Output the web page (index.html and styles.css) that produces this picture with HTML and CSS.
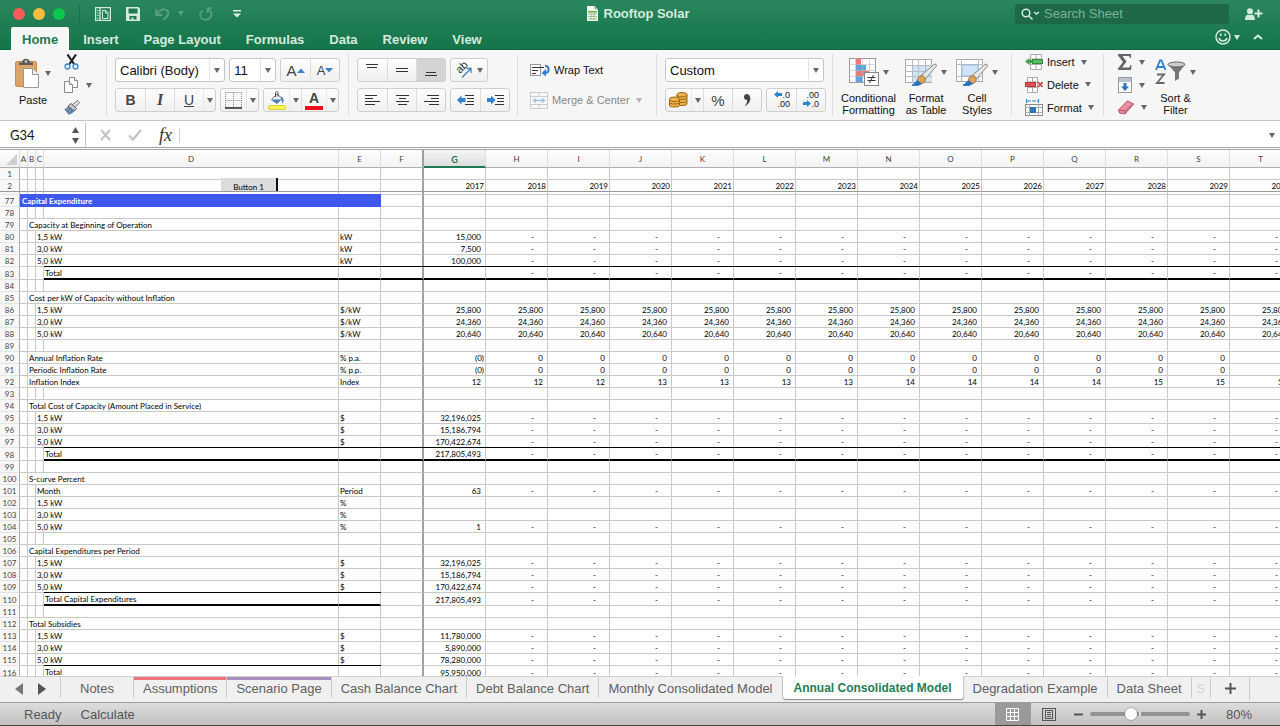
FILE: index.html
```html
<!DOCTYPE html>
<html lang="en">
<head>
    <meta charset="UTF-8">
    <meta name="viewport" content="width=device-width, initial-scale=1.0">
    <title>Rooftop Solar</title>
    <link rel="stylesheet" href="styles.css">
</head>
<body>

<header class="top">
    <div class="titlebar">
        <div class="lights">
            <span class="light red"></span>
            <span class="light amber"></span>
            <span class="light green"></span>
        </div>
        <div class="quick">
            <button type="button" aria-label="Gallery">
                <svg width="16" height="14" viewBox="0 0 16 14" fill="none" stroke="#d5eadf"><rect x="0.5" y="0.5" width="15" height="13" stroke-width="1.4"/><path d="M5 1v12" stroke-width="1.4"/><path d="M2 3.5h1.5M2 6h1.5M2 8.500h1.500M2 11h1.500"/><path d="M7.500 3.500h3.500l2 2v6h-5.500z"/><path d="M10.500 3.500v2.500h2.500"/></svg>
            </button>
            <button type="button" aria-label="Save">
                <svg width="14" height="14" viewBox="0 0 14 14"><path d="M0 0h12.500L14 1.500V14H0z" fill="#d5eadf"/><path d="M2.500 1.500h9v5h-9zM3.500 9h7v3.500h-3v-2h-2v2h-2z" fill="#20794f"/></svg>
            </button>
            <button type="button" class="dim" aria-label="Undo">
                <svg width="16" height="14" viewBox="0 0 16 14" fill="none" stroke="#5c9f80" stroke-width="1.800"><path d="M1.200 2v6h6M1.500 7.500C5 2.500 9 1.500 12 3.500c3.500 3-.5 6.500-3.500 9"/></svg>
                <span class="caret"></span>
            </button>
            <button type="button" class="dim" aria-label="Redo">
                <svg width="14" height="14" viewBox="0 0 14 14" fill="none" stroke="#5c9f80" stroke-width="1.800"><path d="M8 1.200h5M8.500 1v5M9 2.500c4 2 4.500 6 1.500 8.800-3 2.400-7.500 1.500-9-1.800C.5 7 2 4.500 4 3.500"/></svg>
            </button>
            <button type="button" aria-label="Customize toolbar">
                <svg width="8" height="8" viewBox="0 0 8 8" fill="#e3f2ea"><path d="M0 0h8v1.500H0zM0 3.500h8L4 7.500z"/></svg>
            </button>
        </div>
        <h1 class="title">
            <svg width="11" height="15" viewBox="0 0 11 15"><path d="M0 0h7.500L11 3.500V15H0z" fill="#f4f7f2"/><path d="M7.500 0v3.500H11z" fill="#9bb8a5"/><path d="M1 5h9v1.500H1z" fill="#6fae55"/><path d="M1 8h9M1 10.500h9M1 13h9M4 6v8M7 6v8" stroke="#9cc389" fill="none"/></svg>
            Rooftop Solar
        </h1>
        <div class="finder">
            <label class="search">
                <svg width="19" height="12" viewBox="0 0 19 12" fill="none" stroke="#d5eadf" stroke-width="1.500"><circle cx="5" cy="5" r="3.800"/><path d="M8 8l3.500 3.500M13 4l2.500 2L18 4"/></svg>
                <input type="text" placeholder="Search Sheet" aria-label="Search Sheet">
            </label>
            <button type="button" aria-label="Share">
                <svg width="18" height="12" viewBox="0 0 18 12" fill="#d5eadf"><circle cx="5" cy="3.200" r="3"/><path d="M0 12c0-4 1.500-5 3-5.500 1 .8 3 .8 4 0 1.500.5 3 1.500 3 5.500z"/><path d="M12.500 1.500h2V4.500H17.500v2H14.500v3h-2v-3H9.500v-2h3z"/></svg>
            </button>
        </div>
    </div>
    <nav class="menu">
        <a href="#" class="current">Home</a>
        <a href="#">Insert</a>
        <a href="#">Page Layout</a>
        <a href="#">Formulas</a>
        <a href="#">Data</a>
        <a href="#">Review</a>
        <a href="#">View</a>
        <div class="menu-right">
            <button type="button" aria-label="Feedback">
                <svg width="16" height="16" viewBox="0 0 16 16" fill="none" stroke="#d5eadf" stroke-width="1.500"><circle cx="8" cy="8" r="7"/><path d="M4 9c1 4 7 4 8 0M5.800 4.500v2.500M10.200 4.500v2.500"/></svg>
                <span class="caret"></span>
            </button>
            <button type="button" aria-label="Collapse ribbon">
                <svg width="10" height="6" viewBox="0 0 10 6" fill="none" stroke="#d5eadf" stroke-width="2"><path d="M1 5l4-3.500L9 5"/></svg>
            </button>
        </div>
    </nav>
</header>

<section class="ribbon">
    <div class="group clipboard">
        <button type="button" class="big">
            <span class="pic">
                <svg width="26" height="30" viewBox="0 0 26 30"><rect x="0.500" y="3.500" width="21" height="25" rx="1.500" fill="#dca566" stroke="#c48e50"/><path d="M4 7V4.500h3C7-.5 15-.5 15 4.500h3V7z" fill="#5c5c5c"/><circle cx="11" cy="3.500" r="1.300" fill="#ccc"/><path d="M8.500 10.500h9l6 6v13h-15z" fill="#fff" stroke="#999"/><path d="M17.500 10.500v6h6" fill="#eee" stroke="#999"/></svg>
                <span class="caret"></span>
            </span>
            Paste
        </button>
        <div class="stack">
            <button type="button" aria-label="Cut">
                <svg width="16" height="16" viewBox="0 0 16 16" fill="none"><path d="M3.500 0.500L10 10M12 0.500L5.500 10" stroke="#222" stroke-width="2.200"/><circle cx="3.500" cy="12.500" r="2.500" stroke="#3a86c8" stroke-width="1.300"/><circle cx="11.500" cy="12.500" r="2.500" stroke="#3a86c8" stroke-width="1.300"/></svg>
            </button>
            <button type="button" aria-label="Copy">
                <svg width="15" height="16" viewBox="0 0 15 16" fill="#fff" stroke="#8a8a8a"><path d="M5.500 0.500h5l3 3v7h-8z"/><path d="M10.500 .5v3h3"/><path d="M.5 4.500h5l3 3v8h-8z"/><path d="M5.500 4.500v3h3"/></svg>
                <span class="caret"></span>
            </button>
            <button type="button" aria-label="Format Painter">
                <svg width="16" height="15" viewBox="0 0 16 15"><path d="M13.500 0.500l2 2-4.500 5-3-2.500z" fill="#ddd" stroke="#777"/><path d="M7 3.500l5.500 5-2 2.500-6.500-5z" fill="#c8c8c8" stroke="#666"/><path d="M4 6l6.500 5c-2 2-4 3.500-6 3.500C2.500 12 1.500 10.500 0 9.500 2 9 3 8 4 6z" fill="#4f7fb4"/><path d="M5 8.500L2.500 10.500M7 10L4.500 12.500" stroke="#d6a76a"/></svg>
            </button>
        </div>
    </div>

    <div class="group lines font">
        <div class="row">
            <label class="picker family"><select aria-label="Font"><option>Calibri (Body)</option></select></label>
            <label class="picker size"><select aria-label="Font size"><option>11</option></select></label>
            <div class="set">
                <button type="button" class="half" aria-label="Increase font size"><span class="grow">A</span><svg width="8" height="5" viewBox="0 0 8 5"><path d="M0 5l4-4.500L8 5z" fill="#3f82c4"/></svg></button>
                <button type="button" class="half" aria-label="Decrease font size"><span class="shrink">A</span><svg width="8" height="5" viewBox="0 0 8 5"><path d="M0 0l4 4.500L8 0z" fill="#3f82c4"/></svg></button>
            </div>
        </div>
        <div class="row">
            <div class="set">
                <button type="button" class="half"><b>B</b></button>
                <button type="button" class="half"><i>I</i></button>
                <button type="button" class="half"><u>U</u></button>
                <button type="button" class="drop" aria-label="Underline styles"><span class="caret"></span></button>
            </div>
            <div class="set">
                <button type="button" class="swatch" aria-label="Borders">
                    <svg width="17" height="17" viewBox="0 0 17 17" fill="none"><path d="M.5 .5h16M.5 8.500h16M.5 0v16M8.500 0v16M16.500 0v16" stroke="#888" stroke-dasharray="1 1"/><path d="M0 16h17" stroke="#222" stroke-width="1.500"/></svg>
                </button>
                <button type="button" class="drop" aria-label="Border styles"><span class="caret"></span></button>
            </div>
            <div class="set">
                <button type="button" class="swatch" aria-label="Fill color">
                    <svg width="18" height="19" viewBox="0 0 18 19"><path d="M3.500 8.500l5.500-5.500 5 4.500L9 12.500z" fill="#eee" stroke="#777"/><path d="M3.500 8.500h9.500L9 12.500z" fill="#3f82c4"/><path d="M7.500 6V2.500C7.500 0 10 0 10 2.500V5.500" fill="none" stroke="#444"/><path d="M12.500 5.500c3.500 1 4 4 2 7z" fill="#3f82c4"/><rect x="0.500" y="14.500" width="17" height="4" rx="1" fill="#fcf34b" stroke="#d8cf3c"/></svg>
                </button>
                <button type="button" class="drop" aria-label="Fill colors"><span class="caret"></span></button>
                <button type="button" class="swatch" aria-label="Font color">
                    <span class="ink">A</span>
                </button>
                <button type="button" class="drop" aria-label="Font colors"><span class="caret"></span></button>
            </div>
        </div>
    </div>

    <div class="group lines align">
        <div class="row">
            <div class="set">
                <button type="button" class="half" aria-label="Top align"><svg width="15" height="16" viewBox="0 0 15 16" stroke="#333"><path d="M1 2.500h12M2 5.500h10"/></svg></button>
                <button type="button" class="half" aria-label="Middle align"><svg width="15" height="16" viewBox="0 0 15 16" stroke="#333"><path d="M1 6.500h12M1 9.500h12"/></svg></button>
                <button type="button" class="half pressed" aria-label="Bottom align"><svg width="15" height="16" viewBox="0 0 15 16" stroke="#333"><path d="M2 10.500h10M1 13.500h12"/></svg></button>
            </div>
            <div class="set">
                <button type="button" class="turn" aria-label="Orientation">
                    <svg class="slant" width="18" height="18" viewBox="0 0 18 18"><text x="5" y="13" font-size="11" fill="#333" transform="rotate(-45 5 13)">ab</text><path d="M7 16.500L15.500 8M11.500 7.500h4.500V12" fill="none" stroke="#3f82c4" stroke-width="1.300"/></svg>
                    <span class="caret"></span>
                </button>
            </div>
        </div>
        <div class="row">
            <div class="set">
                <button type="button" class="half" aria-label="Align left"><svg width="15" height="12" viewBox="0 0 15 12" stroke="#333"><path d="M0 1.500h12M0 4.500h8M0 7.500h15M0 10.500h10"/></svg></button>
                <button type="button" class="half" aria-label="Center"><svg width="15" height="12" viewBox="0 0 15 12" stroke="#333"><path d="M1 1.500h13M4 4.500h7M1 7.500h13M3 10.500h9"/></svg></button>
                <button type="button" class="half" aria-label="Align right"><svg width="15" height="12" viewBox="0 0 15 12" stroke="#333"><path d="M3 1.500h12M7 4.500h8M0 7.500h15M5 10.500h10"/></svg></button>
            </div>
            <div class="set">
                <button type="button" class="half" aria-label="Decrease indent"><svg width="17" height="12" viewBox="0 0 17 12"><path d="M8 1.500h9M10 4.500h7M10 7.500h7M8 10.500h9" stroke="#333"/><path d="M0 6l4.500-4.500v2.500H8.500v4H4.500v2.500z" fill="#3181cf"/></svg></button>
                <button type="button" class="half" aria-label="Increase indent"><svg width="17" height="12" viewBox="0 0 17 12"><path d="M8 1.500h9M10 4.500h7M10 7.500h7M8 10.500h9" stroke="#333"/><path d="M8.500 6L4 1.500V4H0v4h4v2.500z" fill="#3181cf"/></svg></button>
            </div>
        </div>
    </div>

    <div class="group lines wrap">
        <button type="button" class="flat">
            <svg width="20" height="14" viewBox="0 0 20 14"><rect x="0.500" y="1.500" width="10" height="11" fill="#fff" stroke="#999"/><path d="M2 4.500h12M2 7.500h6M2 10.500h4" stroke="#333"/><path d="M15 2.500c5 1 4.500 7 .5 7.500" fill="none" stroke="#3181cf" stroke-width="2"/><path d="M11.500 10l4.500-4v7.500z" fill="#3181cf"/></svg>
            Wrap Text
        </button>
        <button type="button" class="flat off">
            <svg width="18" height="17" viewBox="0 0 18 17"><rect x="0.500" y="0.500" width="17" height="16" fill="#f8f8f8" stroke="#ccc"/><path d="M.5 4.500h17M.5 12.500h17M9 0v4M9 13v4" stroke="#ccc"/><path d="M4 8.500h10M6 6.500l-2.500 2L6 10.500M12 6.500l2.500 2L12 10.500" fill="none" stroke="#9cc6e8" stroke-width="1.300"/></svg>
            Merge &amp; Center
            <span class="caret"></span>
        </button>
    </div>

    <div class="group lines number">
        <label class="picker format"><select aria-label="Number format"><option>Custom</option></select></label>
        <div class="row">
            <div class="set">
                <button type="button" class="swatch" aria-label="Accounting format">
                    <svg width="19" height="16" viewBox="0 0 19 16" stroke="#9a6314" fill="#edb24b"><path d="M8 9v3c0 2 10 2 10 0V9z"/><path d="M8 6v3c0 2 10 2 10 0V6z"/><path d="M8 3v3c0 2 10 2 10 0V3z"/><ellipse cx="13" cy="2.800" rx="5" ry="2.200"/><path d="M.5 10.500v3c0 2 10 2 10 0v-3z"/><path d="M.5 7.500v3c0 2 10 2 10 0v-3z"/><ellipse cx="5.500" cy="7.300" rx="5" ry="2.200"/></svg>
                </button>
                <button type="button" class="drop" aria-label="Currencies"><span class="caret"></span></button>
                <button type="button" class="half percent">%</button>
                <button type="button" class="half" aria-label="Comma style"><svg width="8" height="12" viewBox="0 0 8 12"><path d="M1 3a3 3 0 013-3c5 1 4.500 9.500-2.500 12 2-2 3-4 2.500-6a3 3 0 01-3-3z" fill="#444"/></svg></button>
            </div>
            <div class="set">
                <button type="button" class="half decimals" aria-label="Increase decimal">
                    <span><svg width="8" height="7" viewBox="0 0 8 7"><path d="M0 3.500L4 0v2h4v3H4v2z" fill="#3181cf"/></svg>.0</span>
                    <span>.00</span>
                </button>
                <button type="button" class="half decimals" aria-label="Decrease decimal">
                    <span>.00</span>
                    <span><svg width="8" height="7" viewBox="0 0 8 7"><path d="M8 3.500L4 0v2H0v3h4v2z" fill="#3181cf"/></svg>.0</span>
                </button>
            </div>
        </div>
    </div>

    <div class="group styles">
        <button type="button" class="big">
            <span class="pic">
                <svg width="30" height="28" viewBox="0 0 30 28"><rect x="0.500" y="0.500" width="26" height="24" fill="#fff" stroke="#999"/><path d="M7 1h5v6H7zM7 13h13v5H7z" fill="#ee7a7e"/><path d="M7 7h10v6H7zM7 18h7v6H7z" fill="#5fa3e0"/><path d="M0 6.500h27M0 12.500h27M0 18.500h27M6.500 0v25M13.500 0v25M20.500 0v25" stroke="#bbb" fill="none" opacity="0.600"/><rect x="15.500" y="14.500" width="14" height="13" fill="#fff" stroke="#888"/><path d="M18.500 19.500h8M18.500 22.500h8M24.500 17l-4 8" stroke="#333"/></svg>
                <span class="caret"></span>
            </span>
            Conditional<br>Formatting
        </button>
        <button type="button" class="big">
            <span class="pic">
                <svg width="32" height="28" viewBox="0 0 32 28"><rect x="0.500" y="1.500" width="26" height="23" fill="#fff" stroke="#aaa"/><path d="M7 7h20v17H7z" fill="#cfe4f7"/><path d="M0 7.500h27M0 13.500h27M0 18.500h27M7.500 1v24M13.500 1v24M20.500 1v24" stroke="#b5bcc2" fill="none"/><path d="M15.500 18L29 6.500c2-1 3 0 2 2L19.500 22z" fill="#e8e8e8" stroke="#888"/><path d="M13 20c2-3 6-3 7 0 1 4-2 6-6 6-2-1-2-4-1-6z" fill="#dba55e" stroke="#a9722f"/><path d="M7 27c3-1 3-3 5-4 2 0 4 2 4 3-3 2-6 2-9 1z" fill="#2873c0" stroke="#2873c0"/></svg>
                <span class="caret"></span>
            </span>
            Format<br>as Table
        </button>
        <button type="button" class="big">
            <span class="pic">
                <svg width="32" height="28" viewBox="0 0 32 28"><rect x="0.500" y="1.500" width="26" height="22" fill="#fff" stroke="#aaa"/><path d="M0 6.500h27M0 18.500h27M5.500 1v22M22.500 1v22" stroke="#b5bcc2" fill="none"/><path d="M6 7h16v11H6z" fill="#cfe4f7" stroke="#9bbbd8"/><path d="M15.500 18L29 6.500c2-1 3 0 2 2L19.500 22z" fill="#e8e8e8" stroke="#888"/><path d="M13 20c2-3 6-3 7 0 1 4-2 6-6 6-2-1-2-4-1-6z" fill="#dba55e" stroke="#a9722f"/><path d="M7 27c3-1 3-3 5-4 2 0 4 2 4 3-3 2-6 2-9 1z" fill="#2873c0" stroke="#2873c0"/></svg>
                <span class="caret"></span>
            </span>
            Cell<br>Styles
        </button>
    </div>

    <div class="group cells">
        <button type="button" class="flat">
            <svg width="18" height="16" viewBox="0 0 18 16"><path d="M5.500 .5h11v15h-11zM5.500 5h11M5.500 10.500h11M11 0v16" fill="#fff" stroke="#aaa"/><path d="M0 7.500L4.500 4v2H7v3H4.500v2z" fill="#3da34b"/><rect x="7.500" y="5.500" width="10" height="4" fill="#5dbb63" stroke="#2f8a3c"/></svg>
            Insert
            <span class="caret"></span>
        </button>
        <button type="button" class="flat">
            <svg width="18" height="16" viewBox="0 0 18 16"><path d="M2.500 .5h10v15h-10zM2.500 5h10M2.500 10.500h10M7.500 0v16" fill="#fff" stroke="#aaa"/><rect x="0.500" y="5.500" width="10" height="4" fill="#e25353" stroke="#b93434"/><path d="M13 5l4.500 5M17.500 5L13 10" stroke="#d23c3c" stroke-width="1.600"/></svg>
            Delete
            <span class="caret"></span>
        </button>
        <button type="button" class="flat">
            <svg width="18" height="17" viewBox="0 0 18 17"><path d="M1.500 0v4M13.500 0v4M2 2h11" stroke="#3181cf" stroke-dasharray="4 1"/><rect x="0.500" y="5.500" width="17" height="11" fill="#fff" stroke="#888"/><path d="M0 8.500h18M0 13.500h18M4.500 5v12M13.500 5v12" stroke="#aaa"/><rect x="5" y="8" width="6" height="6" fill="#2f77bd"/></svg>
            Format
            <span class="caret"></span>
        </button>
    </div>

    <div class="group editing">
        <div class="stack">
            <button type="button" aria-label="AutoSum">
                <svg width="14" height="16" viewBox="0 0 14 16"><path d="M0 0h13v4h-1C11.500 2 11 2 9.500 2H4.500l4 5.500-4.500 6h6c1.500 0 2-.5 2.500-2.500h1L13 16H0v-1.500L5 8 0 1.500z" fill="#666"/></svg>
                <span class="caret"></span>
            </button>
            <button type="button" aria-label="Fill">
                <svg width="14" height="16" viewBox="0 0 14 16"><rect x="0.500" y="0.500" width="13" height="15" fill="#fff" stroke="#999"/><path d="M1 1h12v4H1z" fill="#b9c3cc"/><path d="M5.500 6h3v3.500h2.500L7 14 3 9.500h2.500z" fill="#2f77bd"/></svg>
                <span class="caret"></span>
            </button>
            <button type="button" aria-label="Clear">
                <svg width="16" height="15" viewBox="0 0 16 15"><path d="M.5 10L9.500 .8l6 3.200L7 14 1.500 13z" fill="#ea8fa0" stroke="#b5566a"/><path d="M.5 10l6.500 1V14M7 11l8.500-7" fill="none" stroke="#b5566a"/></svg>
                <span class="caret"></span>
            </button>
        </div>
        <button type="button" class="big">
            <span class="pic">
                <svg width="31" height="28" viewBox="0 0 31 28"><path d="M1 12L5 2.500h1.500L10.500 12M2.500 9h6.500" fill="none" stroke="#3181cf" stroke-width="1.800"/><path d="M2 16.500h7L2 25h7.500" fill="none" stroke="#666" stroke-width="1.800"/><path d="M13 6.500l7 8v8.500l4-2.500v-6l6-8z" fill="#777"/><ellipse cx="21.500" cy="6.500" rx="8.500" ry="2.500" fill="#ccc" stroke="#666"/></svg>
                <span class="caret"></span>
            </span>
            Sort &amp;<br>Filter
        </button>
    </div>
</section>

<section class="formula-bar">
    <label class="name-box">
        <input type="text" value="G34" aria-label="Name Box">
        <svg width="7" height="17" viewBox="0 0 7 17" fill="#555"><path d="M0 6l3.500-6L7 6zM0 11l3.500 6L7 11z"/></svg>
    </label>
    <button type="button" aria-label="Cancel"><svg width="11" height="12" viewBox="0 0 11 12" stroke="#c4c4c4" stroke-width="2"><path d="M1 1l9 10M10 1L1 11"/></svg></button>
    <button type="button" aria-label="Enter"><svg width="14" height="12" viewBox="0 0 14 12" fill="none" stroke="#c4c4c4" stroke-width="2.400"><path d="M1 6.500L5 10.500 13 1"/></svg></button>
    <button type="button" class="fx">fx</button>
    <input type="text" class="formula" aria-label="Formula">
    <button type="button" class="expand" aria-label="Expand formula bar"><span class="caret"></span></button>
</section>

<main class="sheet">
    <table>
        <colgroup id="cols"></colgroup>
        <thead id="head"></thead>
        <tbody id="body"></tbody>
    </table>
</main>

<nav class="tabs">
    <div class="arrows">
        <button type="button" aria-label="Previous sheet"><svg width="8" height="12" viewBox="0 0 8 12"><path d="M8 0v12L0 6z" fill="#777"/></svg></button>
        <button type="button" aria-label="Next sheet"><svg width="8" height="12" viewBox="0 0 8 12"><path d="M0 0v12l8-6z" fill="#555"/></svg></button>
    </div>
    <a href="#" class="roomy">Notes</a>
    <a href="#" class="pink">Assumptions</a>
    <a href="#" class="purple">Scenario Page</a>
    <a href="#">Cash Balance Chart</a>
    <a href="#">Debt Balance Chart</a>
    <a href="#">Monthly Consolidated Model</a>
    <a href="#" class="active">Annual Consolidated Model</a>
    <a href="#">Degradation Example</a>
    <a href="#">Data Sheet</a>
    <a href="#" class="faded">S</a>
    <button type="button" class="add" aria-label="Insert sheet"><svg width="11" height="11" viewBox="0 0 11 11" stroke="#555" stroke-width="2"><path d="M5.500 0v11M0 5.500h11"/></svg></button>
</nav>

<footer class="status">
    <span>Ready</span>
    <span>Calculate</span>
    <div class="views">
        <button type="button" class="view on" aria-label="Normal view"><svg width="13" height="13" viewBox="0 0 13 13" fill="none" stroke="#fff"><path d="M.5 .5h12v12H.5zM.5 4.500h12M.5 8.500h12M4.500 .5v12M8.500 .5v12"/></svg></button>
        <button type="button" class="view" aria-label="Page layout view"><svg width="14" height="13" viewBox="0 0 14 13" fill="none" stroke="#555"><rect x="0.500" y="0.500" width="13" height="12"/><rect x="3.500" y="2.500" width="7" height="8"/><path d="M5 4.500h4M5 6.500h4M5 8.500h4"/></svg></button>
        <button type="button" class="step" aria-label="Zoom out"><svg width="9" height="9" viewBox="0 0 9 9" stroke="#555" stroke-width="2"><path d="M0 4.500h9"/></svg></button>
        <input type="range" class="zoom" min="0" max="100" value="40" aria-label="Zoom">
        <button type="button" class="step" aria-label="Zoom in"><svg width="9" height="9" viewBox="0 0 9 9" stroke="#555" stroke-width="2"><path d="M0 4.500h9M4.500 0v9"/></svg></button>
        <span class="percent-value">80%</span>
    </div>
</footer>

<script src="script.js"></script>
</body>
</html>
```

FILE: styles.css
```css
* {
    box-sizing: border-box;
}
body {
    margin: 0;
    height: 100vh;
    display: flex;
    flex-direction: column;
    overflow: hidden;
    font-family: "Liberation Sans", Arial, sans-serif;
    font-size: 11px;
    color: #111;
    background-color: #fff;
}
button {
    display: flex;
    align-items: center;
    justify-content: center;
    margin: 0;
    padding: 0;
    border: none;
    background: none;
    font: inherit;
    color: inherit;
}
input, select {
    margin: 0;
    padding: 0;
    border: none;
    outline: none;
    background: none;
    font: inherit;
    color: inherit;
}
a {
    color: inherit;
    text-decoration: none;
}
svg {
    display: block;
    flex: none;
}
.caret {
    flex: none;
    border: 3px solid transparent;
    border-top: 5px solid #666;
    border-bottom: none;
}

/* Green top bar */
.top {
    flex: none;
    background: linear-gradient(#2b865c, #14744a);
    border-bottom: 1px solid #0f6640;
    color: #d5eadf;
}
.titlebar {
    display: grid;
    grid-template-columns: 1fr auto 1fr;
    grid-template-areas: "quick title finder";
    align-items: center;
    height: 27px;
    padding: 0 17px 0 13px;
}
.lights {
    grid-area: quick;
    display: flex;
    gap: 8px;
}
.light {
    width: 12px;
    height: 12px;
    border-radius: 50%;
}
.red {
    background-color: #fc5b57;
}
.amber {
    background-color: #fdbc40;
}
.green {
    background-color: #0ac84f;
}
.quick {
    grid-area: quick;
    display: flex;
    align-items: center;
    gap: 15px;
    height: 18px;
    margin-left: 66px;
    padding-left: 15px;
    border-left: 1px solid #1c6f4a;
}
.quick button {
    gap: 7px;
}
.quick button:last-child {
    margin-left: 5px;
}
.dim .caret {
    border-top-color: #5c9f80;
}
.title {
    grid-area: title;
    display: flex;
    align-items: center;
    gap: 6px;
    margin: 0;
    font-size: 13px;
    line-height: 27px;
}
.finder {
    grid-area: finder;
    display: flex;
    justify-content: flex-end;
    gap: 16px;
}
.search {
    display: flex;
    align-items: center;
    gap: 4px;
    width: 214px;
    height: 20px;
    padding: 0 6px;
    border-radius: 3px;
    background-color: #1d6947;
}
.search input {
    flex: 1;
    min-width: 0;
    font-size: 13px;
}
.search input::placeholder {
    color: #7fb297;
}
.menu {
    display: flex;
    gap: 3px;
    height: 22px;
    padding: 0 17px 0 11px;
    font-size: 13px;
    font-weight: bold;
    line-height: 25px;
}
.menu a {
    padding: 0 11px;
}
.menu .current {
    height: 23px;
    border-radius: 2px 2px 0 0;
    background-color: #f7f7f7;
    color: #1f7a50;
}
.menu-right {
    display: flex;
    align-items: center;
    gap: 13px;
    height: 20px;
    margin-left: auto;
}
.menu-right button {
    gap: 3px;
}
.menu-right .caret {
    border-top-color: #d5eadf;
}

/* Ribbon */
.ribbon {
    flex: none;
    display: flex;
    height: 71px;
    padding: 4px 0;
    border-bottom: 1px solid #c4c4c4;
    background-color: #f6f6f6;
}
.group {
    flex: none;
    display: flex;
    padding: 0 8px;
    border-right: 1px solid #dedede;
}
.group:last-child {
    border-right: none;
}
.lines {
    flex-direction: column;
    gap: 6px;
    padding-top: 4px;
}
.row {
    display: flex;
    gap: 4px;
}
.set {
    display: flex;
    height: 24px;
    border: 1px solid #cfcfcf;
    border-radius: 3px;
    background: linear-gradient(#fdfdfd, #f0f0f0);
}
.set button + button {
    border-left: 1px solid #dcdcdc;
}
.half {
    width: 29px;
    color: #444;
    font-size: 14px;
}
.half i {
    font-family: "Liberation Serif", serif;
    font-size: 16px;
    font-weight: bold;
}
.drop {
    width: 12px;
}
.set .drop {
    border-left-color: #e8e8e8;
}
.swatch {
    width: 25px;
}
.pressed {
    background-color: #d4d4d4;
}
.turn {
    gap: 4px;
    width: 36px;
}
.slant {
    overflow: visible;
}
.picker {
    display: flex;
    align-items: center;
    height: 24px;
    padding: 0 4px;
    border: 1px solid #c4c4c4;
    border-radius: 3px;
    background-color: #fff;
    font-size: 13px;
}
.picker::after {
    content: "";
    border: 3px solid transparent;
    border-top: 5px solid #666;
    border-bottom: none;
}
.picker select {
    flex: 1;
    align-self: stretch;
    min-width: 0;
    margin-right: 4px;
    border-right: 1px solid #e4e4e4;
    border-radius: 0;
    appearance: none;
}
.family {
    width: 111px;
}
.size {
    width: 47px;
}
.clipboard {
    width: 107px;
    gap: 13px;
    padding: 0 0 0 15px;
}
.font {
    width: 242px;
}
.align {
    width: 169px;
}
.wrap {
    width: 139px;
    padding-left: 12px;
}
.number {
    width: 176px;
}
.styles {
    width: 179px;
    gap: 9px;
}
.cells {
    width: 92px;
    flex-direction: column;
    gap: 6px;
    padding: 0 0 0 13px;
}
.editing {
    gap: 8px;
    padding-left: 14px;
}
.grow {
    font-size: 15px;
}
.shrink {
    font-size: 13px;
}
.ink {
    width: 18px;
    border-bottom: 4px solid #e8111c;
    font-size: 14px;
    font-weight: bold;
    line-height: 15px;
    color: #444;
}
.percent {
    font-size: 15px;
}
.decimals {
    flex-direction: column;
    align-items: flex-end;
    padding-right: 6px;
    font-size: 9px;
    line-height: 9px;
    color: #222;
}
.decimals span {
    display: flex;
}
.big {
    flex-direction: column;
    justify-content: flex-start;
    line-height: 12px;
}
.pic {
    display: flex;
    align-items: center;
    gap: 4px;
    height: 32px;
    margin: 3px 0 5px;
}
.stack {
    display: flex;
    flex-direction: column;
    gap: 6px;
}
.stack button {
    justify-content: flex-start;
    gap: 7px;
    height: 17px;
}
.flat {
    justify-content: flex-start;
    gap: 4px;
    height: 17px;
}
.wrap .flat {
    height: 24px;
}
.flat .caret {
    margin-left: 2px;
}
.off {
    color: #8a8a8a;
}
.off .caret {
    border-top-color: #b5b5b5;
}

/* Formula bar */
.formula-bar {
    flex: none;
    display: flex;
    align-items: center;
    height: 29px;
    padding-top: 2px;
    border-bottom: 3px double #a5a5a5;
    background-color: #fff;
}
.name-box {
    display: flex;
    align-items: center;
    width: 86px;
    height: 24px;
    margin-right: 14px;
    padding: 0 6px 0 10px;
    border-right: 1px solid #c4c4c4;
}
.name-box input {
    flex: 1;
    min-width: 0;
    font-family: Lato, sans-serif;
    font-size: 13px;
}
.formula-bar button {
    margin-right: 17px;
}
.formula-bar .fx {
    margin-right: 7px;
    font-family: "Liberation Serif", serif;
    font-size: 18px;
    font-style: italic;
    color: #333;
}
.formula {
    flex: 1;
    height: 15px;
    border-left: 1px solid #d4d4d4;
}
.formula-bar .expand {
    margin-right: 5px;
}

/* Grid */
.sheet {
    flex: 1;
    min-height: 0;
    overflow: hidden;
}
.sheet table {
    table-layout: fixed;
    width: 1292px;
    border-collapse: separate;
    border-spacing: 0;
    font-family: Lato, "Open Sans", sans-serif;
    font-size: 8px;
    line-height: 9px;
    color: #000;
}
.sheet th,
.sheet td {
    height: 12px;
    padding: 2px 1px 0;
    border: 0 solid #c9c9c9;
    border-width: 0 1px 1px 0;
    white-space: nowrap;
}
.sheet th {
    padding: 2px 0 0;
    background-color: #f8f8f8;
    font-weight: normal;
    color: #444;
    text-align: center;
}
.sheet thead th {
    height: 18px;
    border-color: #dedede;
    border-bottom-color: #b0b0b0;
    background: linear-gradient(#fdfdfd, #f2f2f2);
}
.sheet tbody th {
    border-color: #e4e4e4;
    border-right-color: #aaa;
}
.sheet thead .picked {
    border-bottom: 2px solid #1e7a50;
    background: linear-gradient(#f4f4f4, #dedede);
    font-size: 9px;
    font-weight: bold;
    color: #1e7a50;
}
.corner svg {
    margin-left: 6px;
}
.sheet .split {
    border-right: 2px solid #a0a0a0;
}
.sheet .freeze > * {
    border-bottom-color: #999;
}
.sheet .sliver > * {
    height: 3px;
    padding: 0;
    line-height: 2px;
}
.num {
    text-align: right;
}
.sheet .amount {
    padding-right: 4px;
}
.sheet .dash {
    padding-right: 13px;
}
.sheet .banner {
    padding-left: 2px;
    border-color: #3e57ee;
    background-color: #3e57ee;
    box-shadow: 0 -1px #3e57ee;
    font-weight: bold;
    color: #fff;
}
.sheet .total {
    border-bottom: 2px solid #000;
    box-shadow: 0 -1px #000;
}
.host {
    position: relative;
}
/* Form button floating over the frozen rows */
.macro {
    position: absolute;
    top: -2px;
    left: 177px;
    width: 57px;
    height: 13px;
    padding-top: 6px;
    overflow: hidden;
    border-right: 2px solid #111;
    background-color: #dcdcdc;
}

/* Sheet tabs */
.tabs {
    flex: none;
    display: flex;
    height: 26px;
    border-top: 1px solid #d0d0d0;
    background-color: #f0f0f0;
    font-size: 13px;
    line-height: 23px;
    color: #606060;
}
.arrows {
    display: flex;
    gap: 15px;
    width: 61px;
    height: 21px;
    padding: 3px 0 0 15px;
    border-right: 1px solid #d0d0d0;
}
.tabs a {
    height: 21px;
    padding: 0 9px;
    border-right: 1px solid #ccc;
    white-space: nowrap;
}
.tabs .roomy {
    padding: 0 19px;
}
.tabs .pink {
    box-shadow: inset 0 3px #f0737c;
}
.tabs .purple {
    box-shadow: inset 0 3px #a98cc0;
}
.tabs .active {
    margin-top: -1px;
    height: 23px;
    padding: 0 11px;
    border-radius: 0 0 3px 3px;
    background-color: #fff;
    box-shadow: 0 1px 1px #888;
    font-size: 12px;
    font-weight: bold;
    line-height: 25px;
    color: #1f7f55;
}
.tabs .faded {
    padding: 0 5px;
    color: #d4d4d4;
}
.add {
    width: 39px;
    height: 23px;
    border-right: 1px solid #ccc;
}

/* Status bar */
.status {
    flex: none;
    display: flex;
    align-items: center;
    gap: 19px;
    height: 24px;
    padding-left: 24px;
    border-top: 1px solid #9c9c9c;
    border-bottom: 1px solid #444;
    background: linear-gradient(#dcdcdc, #c2c2c2);
    font-size: 13px;
    color: #555;
}
.views {
    display: flex;
    align-items: center;
    height: 22px;
    margin-left: auto;
    padding-right: 28px;
}
.view {
    width: 36px;
    height: 22px;
}
.on {
    background-color: #9a9a9a;
}
.step {
    width: 9px;
    margin: 0 7px;
}
.zoom {
    width: 100px;
    height: 14px;
    appearance: none;
}
.zoom::-webkit-slider-runnable-track {
    height: 4px;
    border-radius: 2px;
    background: linear-gradient(90deg, #939393 49px, #ddd 49px, #ddd 51px, #939393 51px);
}
.zoom::-webkit-slider-thumb {
    width: 12px;
    height: 12px;
    margin-top: -4px;
    border-radius: 50%;
    background-color: #fff;
    box-shadow: 0 0 2px #666;
    appearance: none;
}
.percent-value {
    margin-left: 13px;
}
```

FILE: script.js
```js
const letters = 'ABCDEFGHIJKLMNOPQRST'.split('');
const widths = [20, 8, 8, 8, 295, 42, 43].concat(Array(14).fill(62));
const dash = Array(13).fill('-');
const same = value => Array(13).fill(value);

// number, kind, label, unit, first year, following years
const rows = [
    [1],
    [2, 'years', '', '', '2017', Array.from({ length: 13 }, (_, i) => String(2018 + i))],
    ['', 'sliver'],
    [77, 'banner', 'Capital Expenditure'],
    [78],
    [79, 'head', 'Capacity at Beginning of Operation'],
    [80, 'item', '1,5 kW', 'kW', '15,000', dash],
    [81, 'item', '3,0 kW', 'kW', '7,500', dash],
    [82, 'item', '5,0 kW', 'kW', '100,000', dash],
    [83, 'total', 'Total', '', '', dash],
    [84],
    [85, 'head', 'Cost per kW of Capacity without Inflation'],
    [86, 'item', '1,5 kW', '$/kW', '25,800', same('25,800')],
    [87, 'item', '3,0 kW', '$/kW', '24,360', same('24,360')],
    [88, 'item', '5,0 kW', '$/kW', '20,640', same('20,640')],
    [89],
    [90, 'head', 'Annual Inflation Rate', '% p.a.', '(0)', same('0')],
    [91, 'head', 'Periodic Inflation Rate', '% p.p.', '(0)', same('0')],
    [92, 'head', 'Inflation Index', 'Index', '12', ['12', '12', '13', '13', '13', '13', '14', '14', '14', '14', '15', '15', '15']],
    [93],
    [94, 'head', 'Total Cost of Capacity (Amount Placed in Service)'],
    [95, 'item', '1,5 kW', '$', '32,196,025', dash],
    [96, 'item', '3,0 kW', '$', '15,186,794', dash],
    [97, 'item', '5,0 kW', '$', '170,422,674', dash],
    [98, 'total', 'Total', '', '217,805,493', dash],
    [99],
    [100, 'head', 'S-curve Percent'],
    [101, 'item', 'Month', 'Period', '63', dash],
    [102, 'item', '1,5 kW', '%'],
    [103, 'item', '3,0 kW', '%'],
    [104, 'item', '5,0 kW', '%', '1', dash],
    [105],
    [106, 'head', 'Capital Expenditures per Period'],
    [107, 'item', '1,5 kW', '$', '32,196,025', dash],
    [108, 'item', '3,0 kW', '$', '15,186,794', dash],
    [109, 'item', '5,0 kW', '$', '170,422,674', dash],
    [110, 'subtotal', 'Total Capital Expenditures', '', '217,805,493', dash],
    [111],
    [112, 'head', 'Total Subsidies'],
    [113, 'item', '1,5 kW', '$', '11,780,000', dash],
    [114, 'item', '3,0 kW', '$', '5,890,000', dash],
    [115, 'item', '5,0 kW', '$', '78,280,000', dash],
    [116, 'subtotal', 'Total', '', '95,950,000', dash]
];

function cell(text, cls = '', span = 1) {
    return `<td class="${cls}" colspan="${span}">${text}</td>`;
}

function labelCells(kind, label, unit) {
    const line = kind === 'total' || kind === 'subtotal' ? 'total' : '';
    if (kind === 'banner') return cell(label, 'banner', 5);
    if (kind === 'head') return cell('') + cell(label, '', 3) + cell(unit);
    if (kind === 'item') return cell('') + cell('') + cell(label, '', 2) + cell(unit);
    if (kind === 'years') {
        return cell('') + cell('') + cell('') + cell('<button type="button" class="macro">Button 1</button>', 'host') + cell('');
    }
    return cell('') + cell('') + cell('') + cell(label, line) + cell(unit, line);
}

function valueCell(text, kind) {
    let cls = 'num';
    if (text === '-') cls += ' dash';
    else if (kind !== 'years' && !text.startsWith('(')) cls += ' amount';
    if (kind === 'total') cls += ' total';
    return cell(text, cls);
}

function buildRow([number, kind = '', label = '', unit = '', first = '', rest = same('')]) {
    const rowClass = { years: 'freeze', sliver: 'sliver' }[kind] || '';
    return `<tr class="${rowClass}"><th>${number}</th>`
        + labelCells(kind, label, unit)
        + cell('', kind === 'total' ? 'split total' : 'split')
        + [first, ...rest].map(text => valueCell(text, kind)).join('')
        + '</tr>';
}

document.getElementById('cols').innerHTML = widths.map(w => `<col style="width: ${w}px">`).join('');
document.getElementById('head').innerHTML = '<tr><th class="corner"><svg width="11" height="11" viewBox="0 0 11 11"><path d="M11 0v11H0z" fill="#d0d0d0"/></svg></th>'
    + letters.map(l => `<th class="${l === 'G' ? 'picked' : l === 'F' ? 'split' : ''}">${l}</th>`).join('') + '</tr>';
document.getElementById('body').innerHTML = rows.map(buildRow).join('');
```
